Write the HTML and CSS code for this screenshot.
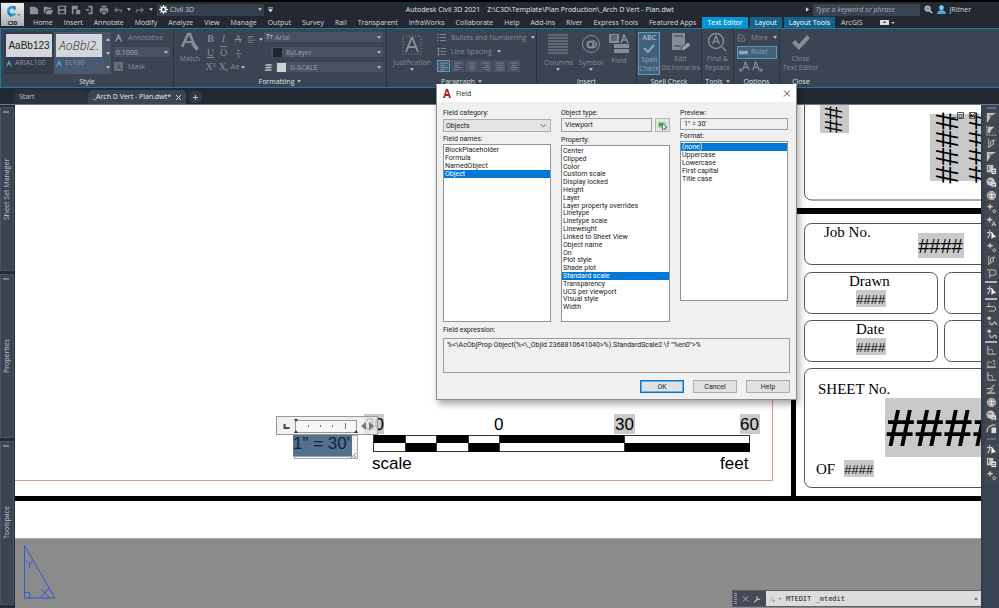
FILE: index.html
```html
<!DOCTYPE html>
<html lang="en">
<head>
<meta charset="utf-8">
<title>Autodesk Civil 3D 2021</title>
<link rel="stylesheet" href="styles.css">
</head>
<body>
<svg class="sprite" aria-hidden="true">
  <symbol id="caret" viewBox="0 0 6 4"><path d="M0 0h6L3 4z" fill="currentColor"/></symbol>
  <symbol id="up" viewBox="0 0 6 4"><path d="M0 4h6L3 0z" fill="currentColor"/></symbol>
  <symbol id="pen" viewBox="0 0 10 10"><path d="M1 10 5 1l4 9M2 7l3-2 3 2" fill="none" stroke="currentColor" stroke-width="1.8"/></symbol>
  <symbol id="list" viewBox="0 0 12 12"><path d="M0 2h2M4 2h8M0 6h2M4 6h8M0 10h2M4 10h8" stroke="currentColor" stroke-width="1.200"/></symbol>
  <symbol id="spacing" viewBox="0 0 12 12"><path d="M5 2h7M5 6h7M5 10h7M2 1v10M0 3l2-2 2 2M0 9l2 2 2-2" fill="none" stroke="currentColor" stroke-width="1.200"/></symbol>
  <symbol id="left" viewBox="0 0 12 12"><path d="M1 1.500h10M1 4.500h6M1 7.500h10M1 10.500h6" stroke="currentColor"/></symbol>
  <symbol id="center" viewBox="0 0 12 12"><path d="M1 1.500h10M3 4.500h6M1 7.500h10M3 10.500h6" stroke="currentColor"/></symbol>
  <symbol id="right" viewBox="0 0 12 12"><path d="M1 1.500h10M5 4.500h6M1 7.500h10M5 10.500h6" stroke="currentColor"/></symbol>
  <symbol id="full" viewBox="0 0 12 12"><path d="M1 1.500h10M1 4.500h10M1 7.500h10M1 10.500h10" stroke="currentColor"/></symbol>
  <symbol id="node" viewBox="0 0 12 12"><path d="M4.500 1v6M1.500 4h6" stroke="currentColor" stroke-width="1.200"/><circle cx="4.500" cy="4" r="1.600" fill="currentColor"/><circle cx="9" cy="9" r="1.500" fill="none" stroke="currentColor"/></symbol>
  <symbol id="nodea" viewBox="0 0 12 12"><path d="M4 1v6M1 4h6" stroke="currentColor" stroke-width="1.200"/><circle cx="4" cy="4" r="1.600" fill="currentColor"/><path d="m6.500 11 2-5 2 5M7 9.500h3" fill="none" stroke="currentColor"/></symbol>
  <symbol id="nodec" viewBox="0 0 12 12"><circle cx="3.500" cy="3.500" r="2" fill="currentColor"/><path d="M4 7c0 4 3 4 4 2s4-1 3 2" fill="none" stroke="currentColor" stroke-width="1.200"/></symbol>
  <symbol id="flag" viewBox="0 0 12 12"><path d="M1 1h10L6 4 4 7 2 11H1z" fill="currentColor"/><path d="M3 3h4L4 6z" fill="#777"/></symbol>
  <symbol id="flag2" viewBox="0 0 12 12"><path d="M2 2h7L6 5 4 9H2z" fill="currentColor"/><path d="M1 1v10h10" fill="none" stroke="currentColor" stroke-dasharray="2 1"/></symbol>
  <symbol id="leaf" viewBox="0 0 12 12"><path d="M3 1v10M3 10l5-3V2L5 4v4" fill="none" stroke="currentColor"/><path d="m7 5 3-3" stroke="currentColor"/></symbol>
  <symbol id="axis" viewBox="0 0 12 12"><path d="M2 1v9h9" fill="none" stroke="currentColor"/><path d="M2 5h5v5" fill="none" stroke="currentColor" stroke-dasharray="2 1"/></symbol>
  <symbol id="poly" viewBox="0 0 12 12"><path d="M2 10V4l4 1 3-3v8z" fill="none" stroke="currentColor" stroke-dasharray="2 1"/><path d="M1 10h10" stroke="currentColor"/></symbol>
  <symbol id="zig" viewBox="0 0 12 12"><path d="M1 5h4l4-4M1 10h9M3 10l5-5" fill="none" stroke="currentColor" stroke-width="1.200"/></symbol>
  <symbol id="globe" viewBox="0 0 12 12"><circle cx="6" cy="6" r="4.500" fill="#999" stroke="currentColor"/><path d="M3 5h6M6 3v6M4 8h4" stroke="#eee" fill="none"/></symbol>
  <symbol id="disc" viewBox="0 0 12 12"><circle cx="5" cy="5" r="4.500" fill="currentColor"/><path d="M6 6h5v5H6z" fill="#eee"/><path d="M7 8h3M7 10h3M2 4h4" stroke="#555"/></symbol>
  <symbol id="doc" viewBox="0 0 12 12"><path d="M1 1h7v8H1z" fill="currentColor"/><path d="M6 5h5v6H6z" fill="#eee"/><path d="M7 7h3M7 9h3M3 2v5" stroke="#444"/></symbol>
  <symbol id="arcdoc" viewBox="0 0 12 12"><path d="M1 10C1 4 5 2 10 2" fill="none" stroke="currentColor" stroke-width="1.200"/><path d="M6 5h5v6H6z" fill="#ddd"/></symbol>
  <symbol id="curve" viewBox="0 0 12 12"><path d="M1 2h7a2.500 2.500 0 0 1 0 6H4V3" fill="none" stroke="currentColor"/><path d="M4 8v3" stroke="currentColor"/></symbol>
  <symbol id="hook" viewBox="0 0 12 12"><path d="M3 1v4h5a2.500 2.500 0 0 1 0 5H3M0 5h4" fill="none" stroke="currentColor"/></symbol>
  <symbol id="arrow" viewBox="0 0 12 12"><path d="M1 4h6M4 1v6M2 10l2-4" stroke="currentColor" stroke-width="1.300"/><path d="M6 3v8l2-2h3z" fill="#fff"/></symbol>
</svg>

<header class="top">
  <button class="app" aria-label="Application menu">
    <svg viewBox="0 0 24 23"><path d="M15 5.500C12 2.500 6 5 6.500 10c.5 5 6 6 9 3" fill="none" stroke="#2a9bd7" stroke-width="3.600"/><path d="M15 3v5M6 12l4 5" stroke="#1470a4" stroke-width="2"/><path d="M18.500 14h4l-2 2z" fill="#444"/></svg>
    <span>C3D</span>
  </button>
  <div class="titlebar">
    <div class="quick">
      <button aria-label="New"><svg viewBox="0 0 12 12"><path d="M1 2h6l4 3v6H1z"/></svg></button>
      <button aria-label="Open"><svg viewBox="0 0 12 12"><path d="M1 2h4l1 1h4v2H4l-2 5H1zM5 6h7l-2 5H3z"/></svg></button>
      <button aria-label="Save"><svg viewBox="0 0 12 12"><path d="M1 1h10v10H1zM3 2v3h6V2zM3 7v3h6V7z" fill-rule="evenodd"/></svg></button>
      <button aria-label="Save as"><svg viewBox="0 0 12 12"><path d="M1 1h7v4H3v6H1zM6 6h5v5H6z"/></svg></button>
      <button aria-label="Upload"><svg viewBox="0 0 12 12"><path d="M4 1h5v10H4V9h3V3H4zM1 5h4v2H1z"/></svg></button>
      <button aria-label="Print"><svg viewBox="0 0 12 12"><path d="M3 1h6v2H3zM1 4h10v5H9V7H3v2H1zM4 8h4v3H4z"/></svg></button>
      <button aria-label="Undo" class="dim"><svg viewBox="0 0 12 12"><path d="M5 2v3h6v4H9V7H5v3L1 6z"/></svg></button>
      <svg class="caret"><use href="#caret"/></svg>
      <button aria-label="Redo" class="dim"><svg viewBox="0 0 12 12"><path d="M7 2v3H1v4h2V7h4v3l4-4z"/></svg></button>
      <svg class="caret"><use href="#caret"/></svg>
      <label class="combo workspace">
        <svg class="gear" viewBox="0 0 12 12"><circle cx="6" cy="6" r="3" fill="none" stroke="#fff" stroke-width="2"/><path d="M6 0v3M6 9v3M0 6h3M9 6h3M2 2l2 2M8 8l2 2M10 2 8 4M4 8l-2 2" stroke="#fff" stroke-width="1.500"/></svg>
        <select aria-label="Workspace"><option>Civil 3D</option></select><svg class="caret"><use href="#caret"/></svg>
      </label>
      <svg class="more" viewBox="0 0 6 6"><path d="M0 0h6v1H0zM0 2h6L3 6z"/></svg>
    </div>
    <h1><span>Autodesk Civil 3D 2021</span><span>Z:\C3D\Template\Plan Production\_Arch D Vert - Plan.dwt</span></h1>
    <div class="account">
      <svg class="tri" viewBox="0 0 4 6"><path d="M0 0v6l4-3z" fill="#ddd"/></svg>
      <input type="search" placeholder="Type a keyword or phrase" aria-label="Search">
      <svg class="ic" viewBox="0 0 10 10"><circle cx="4" cy="4" r="3" fill="#8394a8" stroke="#ddd"/><path d="m6 6 3 3" stroke="#ddd" stroke-width="1.500"/></svg>
      <a href="#"><svg class="ic" viewBox="0 0 10 10"><circle cx="5" cy="3" r="2.600" fill="#8fc9ee"/><path d="M0 10c0-6 10-6 10 0z" fill="#4aa6dc"/></svg>JRitner</a>
    </div>
  </div>
  <nav class="menu">
    <a href="#">Home</a><a href="#">Insert</a><a href="#">Annotate</a><a href="#">Modify</a><a href="#">Analyze</a><a href="#">View</a><a href="#">Manage</a><a href="#">Output</a><a href="#">Survey</a><a href="#">Rail</a><a href="#">Transparent</a><a href="#">InfraWorks</a><a href="#">Collaborate</a><a href="#">Help</a><a href="#">Add-ins</a><a href="#">River</a><a href="#">Express Tools</a><a href="#">Featured Apps</a>
    <a href="#" class="ctx on">Text Editor</a><a href="#" class="ctx">Layout</a><a href="#" class="ctx">Layout Tools</a><a href="#" class="arc">ArcGIS</a>
    <svg class="mini" viewBox="0 0 15 5"><rect width="9" height="5" fill="#ddd"/><path d="M3 3h3L4.500 1z" fill="#333"/><path d="M11 2h4l-2 2z" fill="#bbb"/></svg>
  </nav>
</header>

<section class="ribbon" aria-label="Text Editor">
  <div class="panel p-style">
    <div class="body">
      <div class="gallery">
        <button class="cell"><span class="sample">AaBb123</span><span class="name"><svg class="blue"><use href="#pen"/></svg>ARIAL100</span></button>
        <button class="cell sel"><span class="sample it">AoBbI2.</span><span class="name"><svg class="blue"><use href="#pen"/></svg>EL100</span></button>
        <div class="scroll"><button aria-label="Up"><svg class="caret"><use href="#up"/></svg></button><button aria-label="Down"><svg class="caret"><use href="#caret"/></svg></button><button aria-label="Expand"><svg class="caret"><use href="#caret"/></svg></button></div>
      </div>
      <div class="stack grow">
        <button class="row"><svg class="i8"><use href="#pen"/></svg>Annotative</button>
        <label class="combo"><select aria-label="Text height"><option>0.1000</option></select><svg class="caret"><use href="#caret"/></svg></label>
        <button class="row"><span class="mask">A</span>Mask</button>
      </div>
    </div>
    <h2>Style</h2>
  </div>
  <div class="panel p-format">
    <div class="body">
      <button class="big match"><svg viewBox="0 0 20 20"><path d="M2 15 8 2h2l5 13" fill="none" stroke="currentColor" stroke-width="2.600"/><path d="M4 10h8" stroke="currentColor" stroke-width="2"/><path d="m11 12 3-2 5 6-3 3z" fill="currentColor"/></svg>Match</button>
      <div class="glyphs">
        <button><b>B</b></button><button><i>I</i></button><button><s>A</s></button><button><svg viewBox="0 0 12 10"><path d="M1 1h8M1 3h5M1 6h10M1 9h6" stroke="currentColor"/></svg><svg class="caret"><use href="#caret"/></svg></button>
        <button><u>U</u></button><button><span class="over">O</span></button><button><svg viewBox="0 0 10 12"><path d="M1 6h8M5 1v3M3 2h4M4 8l2 1-2 2h3" stroke="currentColor" fill="none"/></svg></button><span></span>
        <button>X²</button><button>X,</button><button class="case">Aa <svg class="caret"><use href="#caret"/></svg></button><span></span>
      </div>
      <div class="stack grow">
        <label class="combo"><span class="lead">T<small>T</small></span><select aria-label="Font"><option>Arial</option></select><svg class="caret"><use href="#caret"/></svg></label>
        <label class="combo inset"><span class="sw dark"></span><select aria-label="Color"><option>ByLayer</option></select><svg class="caret"><use href="#caret"/></svg></label>
        <div class="pair"><svg class="i9" viewBox="0 0 10 10"><path d="M3 1h7L7 3H0zM3 4h7L7 6H0zM3 7h7L7 9H0z" fill="#aeb3bb"/></svg><label class="combo grow"><span class="sw light"></span><select aria-label="Layer"><option>G-SCALE</option></select><svg class="caret"><use href="#caret"/></svg></label></div>
      </div>
    </div>
    <h2>Formatting <svg class="caret"><use href="#caret"/></svg></h2>
  </div>
  <div class="panel p-para">
    <div class="body">
      <button class="big just"><svg viewBox="0 0 20 20"><path d="M4 17 9.500 3h1L16 17M6 12h8" fill="none" stroke="currentColor" stroke-width="2"/><rect x="1" y="1" width="18" height="18" fill="none" stroke="currentColor" stroke-dasharray="1 2"/></svg>Justification<svg class="caret"><use href="#caret"/></svg></button>
      <div class="stack grow">
        <button class="row"><svg class="i9"><use href="#list"/></svg>Bullets and Numbering <svg class="caret"><use href="#caret"/></svg></button>
        <button class="row"><svg class="i9"><use href="#spacing"/></svg>Line Spacing <svg class="caret"><use href="#caret"/></svg></button>
        <div class="aligns"><button class="hot" aria-label="Default"><svg><use href="#left"/></svg></button><button aria-label="Left"><svg><use href="#left"/></svg></button><button aria-label="Center"><svg><use href="#center"/></svg></button><button aria-label="Right"><svg><use href="#right"/></svg></button><button aria-label="Justify"><svg><use href="#full"/></svg></button><button aria-label="Distribute"><svg><use href="#center"/></svg></button></div>
      </div>
    </div>
    <h2>Paragraph <svg class="caret"><use href="#caret"/></svg></h2>
  </div>
  <div class="panel p-insert">
    <div class="body even">
      <button class="big"><svg viewBox="0 0 20 20"><path d="M0 1h20M0 4h20M0 7h20M0 10h20M0 13h20M0 16h20M0 19h20" stroke="currentColor"/></svg>Columns<svg class="caret"><use href="#caret"/></svg></button>
      <button class="big"><svg viewBox="0 0 20 20"><circle cx="10" cy="10" r="8.500" fill="none" stroke="currentColor"/><circle cx="9.500" cy="10.500" r="3" fill="none" stroke="currentColor" stroke-width="2"/><path d="m13 6-1 7c2 2 4-1 3-5" fill="none" stroke="currentColor" stroke-width="1.500"/></svg>Symbol<svg class="caret"><use href="#caret"/></svg></button>
      <button class="big short"><svg viewBox="0 0 20 20"><path d="M0 0h10v9H0zM5 10h15v4H5zM5 15h15v4H5z" fill="currentColor"/><path d="M2 2h6M2 4h6M2 6h6" stroke="#3b4453"/><path d="m12 9 3-8 4 8M13 6h4" stroke="currentColor" fill="none" stroke-width="1.500"/></svg>Field</button>
    </div>
    <h2>Insert</h2>
  </div>
  <div class="panel p-spell">
    <div class="body">
      <button class="big hot spell"><strong>ABC</strong><svg class="tick" viewBox="0 0 12 9"><path d="m1 4 4 4 6-7" fill="none" stroke="currentColor" stroke-width="2"/></svg>Spell<br>Check</button>
      <button class="big short dict"><svg viewBox="0 0 20 20"><path d="M1 1h13v11l-4 6H1z" fill="currentColor"/><path d="M3 4h9M3 14h7" stroke="#3b4453"/><path d="m10 19 1-4 6-5 3 3-6 5z" fill="#9aa0a9" stroke="#3b4453"/></svg>Edit<br>Dictionaries</button>
    </div>
    <h2>Spell Check</h2>
  </div>
  <div class="panel p-tools">
    <div class="body"><button class="big short"><svg viewBox="0 0 20 20"><circle cx="9" cy="9" r="7.500" fill="none" stroke="currentColor" stroke-width="1.500"/><path d="m5.500 12 3.500-8 3.500 8M7 9.500h4M15 15l4 4" fill="none" stroke="currentColor" stroke-width="1.500"/></svg>Find &amp;<br>Replace</button></div>
    <h2>Tools <svg class="caret"><use href="#caret"/></svg></h2>
  </div>
  <div class="panel p-options">
    <div class="body"><div class="stack">
      <button class="row"><svg class="i8" viewBox="0 0 10 10"><path d="M9 5v4H1V1h6M3 4l2 3 4-6" fill="none" stroke="currentColor"/></svg>More <svg class="caret"><use href="#caret"/></svg></button>
      <button class="row hot"><svg class="i9" viewBox="0 0 10 10"><path d="M0 3h10v4H0z" fill="currentColor"/></svg>Ruler</button>
      <div class="pair aa"><svg viewBox="0 0 12 12"><path d="m4 10 3-9 4 9M5 7h5M0 10h4M2 8v4" fill="none" stroke="currentColor" stroke-width="1.300"/></svg><svg viewBox="0 0 12 12"><path d="m1 10 3-9 4 9M2 7h5M8 10h4M10 8v4" fill="none" stroke="currentColor" stroke-width="1.300"/></svg></div>
    </div></div>
    <h2>Options</h2>
  </div>
  <div class="panel p-close">
    <div class="body"><button class="big short"><svg viewBox="0 0 20 20"><path d="m1 11 3-3 4 4 8-9 3 3L8 18z" fill="currentColor"/></svg>Close<br>Text Editor</button></div>
    <h2>Close</h2>
  </div>
</section>

<nav class="docs">
  <a href="#" class="doc">Start</a>
  <a href="#" class="doc cur">_Arch D Vert - Plan.dwt* <svg viewBox="0 0 6 6"><path d="m0 0 6 6M6 0 0 6" stroke="currentColor"/></svg></a>
  <button aria-label="New drawing"><svg viewBox="0 0 6 6"><path d="M0 3h6M3 0v6" stroke="currentColor"/></svg></button>
</nav>

<main>
  <aside class="palettes"><button>Sheet Set Manager</button><button>Properties</button><button>Toolspace</button></aside>
  <div class="canvas">
    <svg class="drawing" viewBox="15 105 966 503" preserveAspectRatio="xMinYMin slice">
      <rect x="15" y="105" width="966" height="433" fill="#fff"/>
      <rect x="15" y="538" width="966" height="70" fill="#8b8b8b"/>
      <path d="M15 538.500h966" stroke="#a8a8a8"/>
      <path d="M15 480.500h757.500V105" fill="none" stroke="#dd9c8b"/>
      <path d="M15 496h966v5H15zM791 105h5v392h-5zM797 208h184v6H797z"/>
      <g fill="none" stroke="#555">
        <path d="M804.500 100v93a7 7 0 0 0 7 7H990"/>
        <rect x="804.500" y="223.500" width="200" height="41" rx="7"/>
        <rect x="804.500" y="272.500" width="133" height="41" rx="7"/><rect x="944.500" y="272.500" width="133" height="41" rx="7"/>
        <rect x="804.500" y="320.500" width="133" height="41" rx="7"/><rect x="944.500" y="320.500" width="133" height="41" rx="7"/>
        <rect x="804.500" y="368.500" width="200" height="119" rx="7"/>
      </g>
      <g fill="#c9c9c9">
        <rect x="820" y="105" width="29" height="28"/><rect x="930" y="114" width="60" height="67"/>
        <rect x="918" y="233" width="46" height="25"/><rect x="856" y="290" width="30" height="17"/>
        <rect x="856" y="338" width="30" height="17"/><rect x="885" y="398" width="100" height="59"/>
        <rect x="844" y="460" width="30" height="17"/>
        <rect x="364" y="414" width="20" height="20"/><rect x="614" y="414" width="21" height="20"/><rect x="740" y="414" width="20" height="20"/>
      </g>
      <g class="hash">
        <text class="h24" transform="translate(825 106) rotate(90)">##</text>
        <text class="h32" transform="translate(936 112) rotate(90)">####</text>
        <text class="h32" transform="translate(969 112) rotate(90)">####</text>
        <text class="h20" x="918" y="253">####</text>
        <text class="h13" x="856" y="304">####</text><text class="h13" x="856" y="352">####</text><text class="h13" x="844" y="474">####</text>
        <text class="h52" x="885" y="446">####</text>
      </g>
      <g class="serif">
        <text x="824" y="237">Job No.</text><text x="849" y="286">Drawn</text><text x="856" y="334">Date</text>
        <text x="818" y="394">SHEET No.</text><text x="816" y="474">OF</text>
      </g>
      <g fill="none" stroke="#555">
        <path d="M949.500 117.500h7M957.500 112.500h6v6h-6zM959 114.500h3v3h-3zM969.500 112.500h6v6h-6zM970 113l5 5M975 113l-5 5"/>
      </g>
      <rect x="373.500" y="435.500" width="376" height="16" fill="#fff" stroke="#333"/>
      <path d="M374 435h31v8h-31zM436 435h32v8h-32zM405 443h31v9h-31zM468 443h31v9h-31zM499 435h125v8H499zM624 443h126v9H624z"/>
      <path d="M499.500 435v17M624.500 435v17M405.500 435v17M436.500 435v17M468.500 435v17" stroke="#333"/>
      <g class="sans">
        <text x="365" y="430">30</text><text x="494" y="430">0</text><text x="615" y="430">30</text><text x="740" y="430">60</text>
        <text x="372" y="469">scale</text><text x="720" y="469">feet</text>
      </g>
      <rect x="294.500" y="435.500" width="63" height="23" fill="#f2f2f2" stroke="#aaa"/>
      <rect x="293" y="435" width="59" height="21" fill="#54708f"/><path d="M293 456h59v1h-59z" fill="#8fa9c6"/>
      <path d="m351 458 5-5M354 458l2-2" stroke="#888"/>
      <text class="sans navy" x="293" y="449">1" = 30'</text>
      <rect x="276.500" y="416.500" width="101" height="18" fill="#eee" fill-opacity=".8" stroke="#999"/>
      <rect x="295.500" y="420.500" width="61" height="12" fill="#f7f7f7" stroke="#999"/>
      <path d="M308.500 425v2M320.500 425v2M332.500 425v2M345.500 423v6" stroke="#777"/>
      <path d="m294 419h4l-2 3zM294 433l2-3 2 3zM354 433l2-3 2 3z" fill="#333"/>
      <path d="M284.500 424v4h5" fill="none" stroke="#444" stroke-width="2"/>
      <path d="m361 426 5-4v8zM374 426l-5-4v8z" fill="#777"/>
      <g fill="none" stroke="#3558cf">
        <path d="M24.500 545.500v52.500h30.500zM24.500 592.500h5v5.500M26 560.500l3.500 4 3-4M29.500 564v4M41 589l9 9M49 588l-8 9"/>
      </g>
    </svg>
    <form class="command">
      <span class="grip"></span>
      <button type="button" aria-label="Close"><svg viewBox="0 0 8 8"><path d="m1 1 6 6M7 1 1 7" stroke="currentColor"/></svg></button>
      <button type="button" aria-label="Customize"><svg viewBox="0 0 8 8"><path d="m0 8 4-4" stroke="currentColor" stroke-width="1.500"/><path d="M4 1a2 2 0 1 0 3 3" fill="none" stroke="currentColor" stroke-width="1.500"/></svg></button>
      <label class="line"><svg viewBox="0 0 14 8"><path d="m1 7 3-6" stroke="#bbb"/><path d="m3 5 3 1" stroke="#d99" stroke-width="2"/><path d="M9 3h4l-2 2z" fill="#999"/></svg><input value="MTEDIT _mtedit" aria-label="Command"><svg class="caret"><use href="#up"/></svg></label>
    </form>
  </div>
  <aside class="tools">
    <i class="bar"></i>
    <button aria-label="Tool 1"><svg><use href="#flag"/></svg></button><button aria-label="Tool 2"><svg><use href="#flag2"/></svg></button><button aria-label="Tool 3"><svg><use href="#leaf"/></svg></button><button aria-label="Tool 4"><svg><use href="#flag"/></svg></button><button aria-label="Tool 5"><svg><use href="#doc"/></svg></button><button aria-label="Tool 6"><svg><use href="#disc"/></svg></button><button aria-label="Tool 7"><svg><use href="#globe"/></svg></button><button aria-label="Tool 8"><svg><use href="#node"/></svg></button><button aria-label="Tool 9"><svg><use href="#nodea"/></svg></button><button aria-label="Tool 10"><svg><use href="#arrow"/></svg></button><button aria-label="Tool 11"><svg><use href="#node"/></svg></button><button aria-label="Tool 12"><svg><use href="#leaf"/></svg></button><button aria-label="Tool 13"><svg><use href="#curve"/></svg></button>
    <i class="sep"></i><button aria-label="Tool 14"><svg><use href="#arrow"/></svg></button><i class="sep"></i>
    <button aria-label="Tool 15"><svg><use href="#hook"/></svg></button><button aria-label="Tool 16"><svg><use href="#nodec"/></svg></button><button aria-label="Tool 17"><svg><use href="#nodec"/></svg></button><i class="sep"></i>
    <button aria-label="Tool 18"><svg><use href="#axis"/></svg></button><button aria-label="Tool 19"><svg><use href="#poly"/></svg></button><button aria-label="Tool 20"><svg><use href="#axis"/></svg></button><button aria-label="Tool 21"><svg><use href="#zig"/></svg></button><button aria-label="Tool 22"><svg><use href="#globe"/></svg></button><button aria-label="Tool 23"><svg><use href="#disc"/></svg></button><button aria-label="Tool 24"><svg><use href="#arcdoc"/></svg></button>
    <i class="bar low"></i><button aria-label="Tool 25"><svg><use href="#arrow"/></svg></button><button aria-label="Tool 26"><svg><use href="#doc"/></svg></button><button aria-label="Tool 27"><svg><use href="#node"/></svg></button>
  </aside>
</main>

<div class="dialog" role="dialog" aria-labelledby="dlg">
  <div class="cap"><svg viewBox="0 0 8 9"><path d="M0 9 3 0h2l3 9H6L5.500 7h-3L2 9z" fill="#b3202a"/><path d="M3 5h2L4 2z" fill="#fff"/></svg><span id="dlg">Field</span><button aria-label="Close"><svg viewBox="0 0 8 8"><path d="m1 1 6 6M7 1 1 7" stroke="#222" stroke-width=".8"/></svg></button></div>
  <div class="content">
    <div class="cols">
      <div class="col c1">
        <label for="cat">Field category:</label>
        <div class="dd"><select id="cat"><option>Objects</option></select><svg viewBox="0 0 8 5"><path d="m1 1 3 3 3-3" fill="none" stroke="#555"/></svg></div>
        <label id="l-names">Field names:</label>
        <ul role="listbox" tabindex="0" aria-labelledby="l-names"><li role="option">BlockPlaceholder</li><li role="option">Formula</li><li role="option">NamedObject</li><li role="option" aria-selected="true">Object</li></ul>
      </div>
      <div class="col c2">
        <label for="otype">Object type:</label>
        <div class="pick"><input id="otype" value="Viewport" readonly><button aria-label="Select object"><svg viewBox="0 0 12 12"><path d="M1 2h9v7H1z" fill="#9edcae"/><path d="M2 3h4v4H2z" fill="#2fae56"/><path d="M6 4v7l2-2 1 2 1-1-1-2h2z" fill="#fff" stroke="#333" stroke-width=".7"/></svg></button></div>
        <label id="l-prop">Property:</label>
        <ul role="listbox" tabindex="0" aria-labelledby="l-prop"><li role="option">Center</li><li role="option">Clipped</li><li role="option">Color</li><li role="option">Custom scale</li><li role="option">Display locked</li><li role="option">Height</li><li role="option">Layer</li><li role="option">Layer property overrides</li><li role="option">Linetype</li><li role="option">Linetype scale</li><li role="option">Lineweight</li><li role="option">Linked to Sheet View</li><li role="option">Object name</li><li role="option">On</li><li role="option">Plot style</li><li role="option">Shade plot</li><li role="option" aria-selected="true">Standard scale</li><li role="option">Transparency</li><li role="option">UCS per viewport</li><li role="option">Visual style</li><li role="option">Width</li></ul>
      </div>
      <div class="col c3">
        <label for="prev">Preview:</label>
        <input id="prev" value="1&quot; = 30'" readonly>
        <label id="l-fmt">Format:</label>
        <ul role="listbox" tabindex="0" aria-labelledby="l-fmt"><li role="option" aria-selected="true">(none)</li><li role="option">Uppercase</li><li role="option">Lowercase</li><li role="option">First capital</li><li role="option">Title case</li></ul>
      </div>
    </div>
    <label for="expr" class="lx">Field expression:</label>
    <textarea id="expr" readonly>%&lt;\AcObjProp Object(%&lt;\_ObjId 2368810641040&gt;%).StandardScale2 \f "%en0"&gt;%</textarea>
    <div class="actions"><button class="ok">OK</button><button>Cancel</button><button>Help</button></div>
  </div>
</div>
</body>
</html>
```

FILE: styles.css
```css
* { box-sizing: border-box; margin: 0; padding: 0; }
body { height: 100vh; display: flex; flex-direction: column; overflow: hidden; position: relative; background: #222933; font: 7px/8px "Open Sans", "Noto Sans", sans-serif; color: #d5d8dc; }
button, input, select, textarea { font: inherit; color: inherit; background: none; border: 0; border-radius: 0; outline: 0; appearance: none; }
button { display: flex; align-items: center; justify-content: center; }
a { color: inherit; text-decoration: none; }
svg { display: block; flex: none; }
.sprite { position: absolute; width: 0; height: 0; }
.caret { width: 4px; height: 3px; color: #c8ccd2; }
.grow { flex: 1; min-width: 0; }

.top { display: grid; grid-template-columns: 24px 1fr; grid-template-rows: 13px 12px; padding-top: 3px; box-shadow: inset 0 2px #000; }
.app { grid-row: 1 / 3; height: 23px; margin-left: 1px; flex-direction: column; background: linear-gradient(#eee, #a9adb3); color: #111; font-size: 5px; line-height: 5px; font-weight: 700; }
.app svg { width: 23px; height: 17px; }
.titlebar { display: flex; align-items: center; }
.quick { display: flex; align-items: center; gap: 4px; padding-left: 5px; color: #9da2aa; }
.quick button svg { width: 10px; height: 10px; fill: #8b8f96; }
.quick .dim svg { fill: #656b75; }
.combo { display: flex; align-items: center; height: 10px; padding: 0 2px; gap: 2px; background: #475162; color: #a7adb7; }
.combo select { flex: 1; min-width: 0; line-height: 9px; }
.workspace { width: 107px; height: 12px; background: #353e4c; color: #c4c8ce; }
.gear { width: 9px; height: 9px; }
.more { width: 5px; height: 6px; fill: #ddd; }
h1 { flex: 1; display: flex; justify-content: center; gap: 7px; font-size: 7px; font-weight: 400; line-height: 10px; color: #e4e6e8; white-space: nowrap; }
.account { display: flex; align-items: center; gap: 4px; padding-right: 28px; }
.account .tri { width: 3px; height: 5px; }
.account input { width: 107px; height: 12px; padding: 0 2px; background: #3a4350; font-style: italic; }
.account input::placeholder { color: #a9aeb6; opacity: 1; }
.account a { display: flex; align-items: center; gap: 3px; }
.ic { width: 9px; height: 9px; }
.menu { display: flex; align-items: stretch; gap: 11px; padding: 1px 0 0 9px; line-height: 11px; white-space: nowrap; }
.menu .ctx { padding: 0 5px; margin-right: -9px; background: #15638c; color: #fff; }
.menu .on { margin-left: -5px; background: #0696d7; }
.menu .arc { margin-left: 4px; }
.mini { width: 15px; height: 5px; align-self: center; margin-left: 6px; }

.ribbon { display: flex; height: 60px; flex: none; background: #3b4453; border: 1px solid #177ba3; border-right: 0; color: #858c97; white-space: nowrap; }
.panel { display: flex; flex-direction: column; border-right: 1px solid #2c3440; min-width: 0; overflow: hidden; }
.body { flex: 1; display: flex; padding: 3px 3px 0; gap: 3px; min-height: 0; }
.panel h2 { display: flex; align-items: center; justify-content: center; gap: 3px; height: 11px; line-height: 11px; font-size: 7px; font-weight: 400; color: #dfe1e4; }
.p-style { width: 173px; } .p-format { width: 213px; } .p-para { width: 150px; } .p-insert { width: 100px; } .p-spell { width: 65px; } .p-tools { width: 32px; } .p-options { width: 46px; } .p-close { width: 42px; border: 0; overflow: visible; }
.gallery { display: flex; background: #333b48; height: 42px; }
.cell { flex-direction: column; justify-content: flex-start; align-items: stretch; padding: 2px; width: 50px; gap: 2px; }
.cell.sel { background: #4a5a6e; }
.sample { height: 23px; background: #d3d6da; color: #222; font: 10px/23px "Liberation Sans", sans-serif; text-align: center; }
.sample.it { font: italic 300 12px/23px "Open Sans", sans-serif; overflow: hidden; }
.name { display: flex; align-items: center; gap: 3px; color: #8d949e; }
.name svg { width: 6px; height: 7px; color: #4aa6dc; }
.scroll { width: 7px; display: grid; grid-template-rows: repeat(3, 1fr); background: #4a5465; }
.stack { display: flex; flex-direction: column; justify-content: space-between; height: 40px; }
.row { height: 11px; gap: 5px; justify-content: flex-start; }
.i8 { width: 9px; height: 8px; } .i9 { width: 9px; height: 9px; }
.mask { width: 9px; height: 9px; background: #69707b; color: #3b4453; text-align: center; line-height: 9px; }
.big { flex-direction: column; justify-content: flex-start; gap: 1px; line-height: 9px; }
.big svg:not(.caret):not(.tick) { width: 20px; height: 20px; margin-bottom: 3px; }
.big.short svg:not(.tick) { margin-bottom: 1px; }
.p-format .body { gap: 1px; }
.big.match { width: 26px; }
.big.match svg:not(.caret) { margin-bottom: 1px; }
.just { width: 44px; padding-top: 3px; }
.just svg:not(.caret):not(.tick) { margin-bottom: 2px; }
.glyphs { display: grid; grid-template-columns: 13px 13px 16px 17px; grid-template-rows: repeat(3, 14px); font: 10px/12px "Liberation Serif", serif; }
.glyphs button { gap: 3px; }
.glyphs svg:not(.caret) { width: 9px; height: 9px; }
.glyphs .case { font: 7px/8px "Open Sans", sans-serif; gap: 2px; }
.over { text-decoration: overline; }
.lead { color: #d5d8dc; } .lead small { font-size: 6px; }
.p-format .combo { color: #9ba1ab; }
.inset { margin-left: 7px; }
.sw { width: 9px; height: 9px; margin-right: 2px; }
.dark { background: #1f2530; } .light { background: #cdd0d4; }
.pair { display: flex; align-items: center; gap: 2px; }
.aa { padding-left: 2px; }
.aa svg { width: 11px; height: 11px; }
.aligns { display: flex; gap: 1px; }
.aligns button { width: 13px; height: 12px; background: #485264; }
.aligns svg { width: 10px; height: 9px; }
.hot, .aligns .hot { background: #42607a; border: 1px solid #5b9ac4; color: #93a2b1; }
.row.hot { padding: 0 2px 0 1px; height: 13px; gap: 3px; }
.even { justify-content: space-between; padding: 5px 7px 0; }
.even .short { padding: 0; }
.spell { width: 24px; height: 43px; line-height: 9px; }
.spell strong { font-weight: 600; color: #b0b7c1; }
.tick { width: 12px; height: 9px; margin: 1px 0; }
.p-spell .body, .p-tools .body { padding: 3px 1px 0; gap: 1px; justify-content: center; }

.docs { display: flex; height: 17px; flex: none; padding: 2px 0 0 14px; align-items: stretch; border-bottom: 1px solid #737689; }
.doc { width: 74px; padding: 0 5px; line-height: 14px; background: #2b323e; border-radius: 5px 5px 0 0; color: #c0c4ca; white-space: nowrap; }
.doc.cur { display: flex; align-items: center; justify-content: space-between; width: 98px; background: #3b4453; color: #e8eaec; }
.docs svg { width: 5px; height: 5px; }
.docs button { width: 13px; margin: 1px 3px; background: #303946; border-radius: 5px; }

main { flex: 1; display: flex; min-height: 0; }
.palettes { width: 15px; display: flex; flex-direction: column; gap: 3px; padding: 2px 1px 3px 0; background: #252c37; }
.palettes button { flex: 1; position: relative; writing-mode: vertical-rl; transform: rotate(180deg); background: #3b4453; border: 1px solid #4a5465; color: #c3c7cd; line-height: 12px; }
.palettes button::after { content: ""; position: absolute; bottom: 3px; left: 4px; width: 6px; height: 2px; background: #7a828e; }
.canvas { flex: 1; position: relative; min-width: 0; overflow: hidden; background: #8b8b8b; }
.drawing { width: 100%; height: 100%; }
.serif { font: 15px "Liberation Serif", serif; }
.sans { font: 17px "Liberation Sans", sans-serif; }
.navy { fill: #10233f; }
.hash { font-family: "Liberation Sans", sans-serif; font-style: italic; }
.h13 { font-size: 13px; } .h20 { font-size: 20px; } .h24 { font-size: 24px; } .h32 { font-size: 32px; }
.h52 { font-size: 52px; font-weight: 700; }
.command { position: absolute; right: 0; bottom: 1px; width: 249px; height: 17px; display: flex; align-items: center; gap: 5px; background: #444b57; border: 1px solid #59606b; border-right: 0; color: #b5b9bf; }
.command .grip { width: 3px; height: 11px; margin-left: 1px; background: repeating-linear-gradient(#999 0 1px, transparent 1px 2px); }
.command button svg { width: 7px; height: 8px; }
.line { flex: 1; display: flex; align-items: center; gap: 3px; height: 15px; padding: 0 3px; background: #dcdcdc; color: #222; }
.line svg:first-child { width: 14px; height: 8px; }
.line input { flex: 1; min-width: 0; font: 7px/10px "DejaVu Sans Mono", monospace; }
.line .caret { color: #666; }
.tools { width: 18px; display: flex; flex-direction: column; align-items: center; background: #3b4453; border-left: 2px solid #343d4b; }
.tools button { width: 13px; height: 13px; background: #45484e; border: 1px solid #3f4550; border-width: 1px 0; color: #c5c5c5; }
.tools svg { width: 11px; height: 11px; }
.bar { width: 9px; height: 2px; margin: 2px 0; background: #626c7c; }
.bar.low { margin: 3px 0; }
.sep { width: 12px; height: 2px; margin: 1px 0; background: #b0b5bc; }

.dialog { position: absolute; left: 436px; top: 84px; width: 361px; background: #f0f0f0; color: #222; border: 1px solid #8d8d8d; border-top-color: #fff; box-shadow: 2px 4px 7px rgba(0, 0, 0, .35); font: 7px/8px Roboto, "Open Sans", sans-serif; white-space: nowrap; }
.cap { display: flex; align-items: center; gap: 5px; height: 17px; padding: 0 5px 0 6px; background: #fff; }
.cap svg { width: 8px; height: 9px; }
.cap span { font-family: "Open Sans", sans-serif; }
.cap button { margin-left: auto; }
.content { padding: 7px 6px 6px; }
.cols { display: grid; grid-template-columns: 108px 109px 108px; column-gap: 10px; }
.col { display: flex; flex-direction: column; height: 213px; }
.c3 { height: 192px; }
.col label, .lx { display: block; height: 9px; line-height: 9px; }
.dd { display: flex; align-items: center; height: 13px; margin: 1px 0 3px; padding-right: 3px; background: #e3e3e3; border: 1px solid #adadad; }
.dd select { flex: 1; padding: 0 2px; line-height: 10px; }
.dd svg { width: 7px; height: 5px; }
.pick { display: flex; gap: 3px; margin-bottom: 4px; }
.pick input { flex: 1; min-width: 0; height: 14px; }
.pick button { width: 15px; height: 14px; border: 1px solid #b5b5b5; background: #e6e6e6; }
.pick svg { width: 11px; height: 11px; }
.col input { padding: 0 3px; border: 1px solid #9c9c9c; }
.c3 > input { height: 12px; margin-bottom: 2px; }
ul { flex: 1; min-height: 0; list-style: none; background: #fff; border: 1px solid #8f949c; padding-top: 1px; }
li { height: 8px; padding: 0 1px; line-height: 8px; }
.c2 ul { display: grid; grid-template-rows: repeat(21, minmax(0, 1fr)); padding-bottom: 10px; }
.c2 li { height: auto; }
li[aria-selected="true"] { background: #0078d7; color: #fff; }
.lx { margin: 4px 0 3px; }
textarea { display: block; width: 100%; height: 35px; padding: 2px 3px; border: 1px solid #9c9c9c; resize: none; overflow: hidden; white-space: nowrap; }
.actions { display: flex; justify-content: flex-end; gap: 9px; margin-top: 7px; }
.actions button { width: 44px; height: 13px; border: 1px solid #adadad; background: #e1e1e1; }
.actions .ok { border: 1px solid #0078d7; box-shadow: inset 0 0 0 1px #0078d780; }
```
